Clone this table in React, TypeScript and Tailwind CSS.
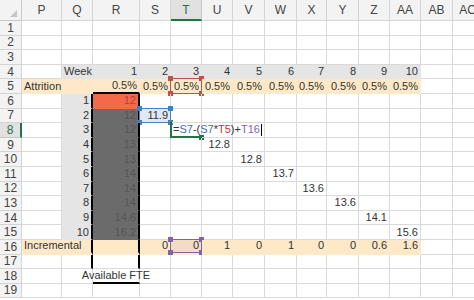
import React from 'react';

const COLS = ['P', 'Q', 'R', 'S', 'T', 'U', 'V', 'W', 'X', 'Y', 'Z', 'AA', 'AB', 'AC'];

type CellInfo = {
  text?: React.ReactNode;
  align?: 'left' | 'right' | 'center';
  cls?: string;
  overlay?: React.ReactNode;
};

const PEACH = 'bg-[#fde9c8] border-r-[#fde9c8] border-b-[#fde9c8]';
const GRAY = 'bg-[#e5e5e5] border-r-[#e5e5e5] border-b-[#e5e5e5]';
const DOUBLE = 'border-b-[3px] border-double border-b-[#3a3a3a]';

function Handle({ pos, color }: { pos: string; color: string }) {
  return <div className={`absolute w-[5px] h-[5px] ${pos} ${color}`} />;
}

function Box({ border, fill, handle }: { border: string; fill: string; handle: string }) {
  return (
    <div className={`absolute -left-px -top-px -right-px -bottom-px border ${border} ${fill}`}>
      <Handle pos="-left-[3px] -top-[3px]" color={handle} />
      <Handle pos="-right-[3px] -top-[3px]" color={handle} />
      <Handle pos="-left-[3px] -bottom-[3px]" color={handle} />
      <Handle pos="-right-[3px] -bottom-[3px]" color={handle} />
    </div>
  );
}

const rValues = ['12', '12', '12', '13', '13', '14', '14', '14', '14.6', '16.2'];
const diag: Record<string, string> = {
  'U9': '12.8',
  'V10': '12.8',
  'W11': '13.7',
  'X12': '13.6',
  'Y13': '13.6',
  'Z14': '14.1',
  'AA15': '15.6',
};
const incr = ['0', '0', '1', '0', '1', '0', '0', '0.6', '1.6'];

function getCell(r: number, ci: number): CellInfo {
  const col = COLS[ci];
  const key = col + r;
  const inBand = ci <= 11; // P..AA
  if (r === 4 && ci >= 1 && ci <= 11) {
    if (ci === 1) return { text: 'Week', align: 'left', cls: GRAY };
    return { text: String(ci - 1), align: 'right', cls: GRAY };
  }
  if (r === 5 && inBand) {
    if (ci === 0) return { text: 'Attrition', align: 'left', cls: PEACH };
    if (ci === 1) return { cls: PEACH };
    const base: CellInfo = {
      text: '0.5%',
      align: 'right',
      cls: PEACH + (ci === 2 ? ' !border-b-2 !border-b-black' : ''),
    };
    if (ci === 4) {
      base.overlay = <Box border="border-[#c0504d]" fill="bg-transparent" handle="bg-[#c0504d]" />;
    }
    return base;
  }
  if (r >= 6 && r <= 15) {
    if (ci === 1) return { text: String(r - 5), align: 'right', cls: GRAY + ' !border-r-2 !border-r-black' };
    if (ci === 2) {
      if (r === 6)
        return {
          text: <span className="text-[#b8432c]">12</span>,
          align: 'right',
          cls: 'bg-[#f26a4b] border-b-[#f26a4b] border-r-2 border-r-black',
        };
      return {
        text: <span className="text-[#565656]">{rValues[r - 6]}</span>,
        align: 'right',
        cls: 'bg-[#6b6b6b] border-b-[#6b6b6b] border-r-2 border-r-black',
      };
    }
    if (key === 'S7') {
      return {
        text: '11.9',
        align: 'right',
        overlay: <Box border="border-[#4a7ebb]" fill="bg-[#dfe8f6]" handle="bg-[#4a7ebb]" />,
      };
    }
    if (key === 'T8') {
      return {
        text: (
          <span className="flex items-center">
            <span className="text-[#333]">=</span>
            <span className="text-[#3d6cc0]">S7</span>
            <span className="text-[#333]">-(</span>
            <span className="text-[#3d6cc0]">S7</span>
            <span className="text-[#333]">*</span>
            <span className="text-[#c0392b]">T5</span>
            <span className="text-[#333]">)+</span>
            <span className="text-[#8a5fb8]">T16</span>
            <span className="inline-block w-px h-[12px] bg-black ml-[1px]" />
          </span>
        ),
        align: 'left',
        overlay: (
          <div className="absolute -left-px -top-px right-0 -bottom-px border-l-2 border-b-2 border-[#217346]">
            <div className="absolute w-[5px] h-[5px] bg-[#217346] -right-[3px] -bottom-[4px]" />
          </div>
        ),
      };
    }
    if (diag[key]) return { text: diag[key], align: 'right' };
  }
  if (r === 16 && inBand) {
    if (ci === 0) return { text: 'Incremental', align: 'left', cls: PEACH + ' ' + DOUBLE };
    if (ci === 1) return { cls: PEACH + ' ' + DOUBLE + ' !border-r-2 !border-r-black' };
    if (ci === 2) return { cls: PEACH + ' ' + DOUBLE + ' !border-r-2 !border-r-black' };
    const c: CellInfo = { text: incr[ci - 3], align: 'right', cls: PEACH + ' ' + DOUBLE };
    if (ci === 4) {
      c.overlay = <Box border="border-[#8064a2]" fill="bg-[#f2dcc6]" handle="bg-[#8064a2]" />;
    }
    return c;
  }
  if (r === 17 && (ci === 1 || ci === 2)) {
    return { cls: '!border-r-2 !border-r-black' };
  }
  if (r === 18 && ci === 2) {
    return { text: 'Available FTE', align: 'center', cls: '!border-b-2 !border-b-black' };
  }
  return {};
}

export default function App() {
  const rows = Array.from({ length: 19 }, (_, i) => i + 1);
  return (
    <div
      className="w-[474px] h-[300px] overflow-hidden bg-white text-[#333]"
      style={{ fontFamily: '"Liberation Sans", Arial, sans-serif' }}
    >
      <div className="grid grid-cols-[22px_40px_31px_47px_31px_31px_31px_32px_32px_30px_32px_31px_31px_32px_30px] grid-rows-[21px_repeat(19,14.6px)]">
        {/* corner */}
        <div className="relative bg-[#f3f3f3] border-r border-b border-[#c8c8c8]">
          <div className="absolute right-[4px] bottom-[3px] w-0 h-0 border-l-[7px] border-l-transparent border-b-[7px] border-b-[#c4c4c4]" />
        </div>
        {COLS.map((c) =>
          c === 'T' ? (
            <div
              key={c}
              className="flex items-center justify-center bg-[#e1e1e1] border-r border-r-[#c8c8c8] border-b-2 border-b-[#217346] text-[12px] text-[#217346]"
            >
              {c}
            </div>
          ) : (
            <div
              key={c}
              className="flex items-center justify-center bg-[#f3f3f3] border-r border-b border-[#d4d4d4] text-[12px] text-[#444]"
            >
              {c}
            </div>
          )
        )}
        {rows.map((r) => (
          <React.Fragment key={r}>
            {r === 8 ? (
              <div className="flex items-center justify-center bg-[#e1e1e1] border-r-2 border-r-[#217346] border-b border-b-[#c8c8c8] text-[12px] text-[#217346]">
                {r}
              </div>
            ) : (
              <div className="flex items-center justify-center bg-[#f3f3f3] border-r border-b border-[#d4d4d4] text-[12px] text-[#444]">
                {r}
              </div>
            )}
            {COLS.map((c, ci) => {
              const info = getCell(r, ci);
              const justify =
                info.align === 'right'
                  ? 'justify-end pr-[2px]'
                  : info.align === 'center'
                  ? 'justify-center'
                  : 'justify-start pl-[2px]';
              return (
                <div
                  key={c}
                  className={`relative flex items-center whitespace-nowrap text-[11px] leading-none border-r border-b border-[#dadada] ${justify} ${info.cls ?? ''}`}
                >
                  {info.overlay}
                  {info.text !== undefined && <span className="relative z-10">{info.text}</span>}
                </div>
              );
            })}
          </React.Fragment>
        ))}
      </div>
    </div>
  );
}
